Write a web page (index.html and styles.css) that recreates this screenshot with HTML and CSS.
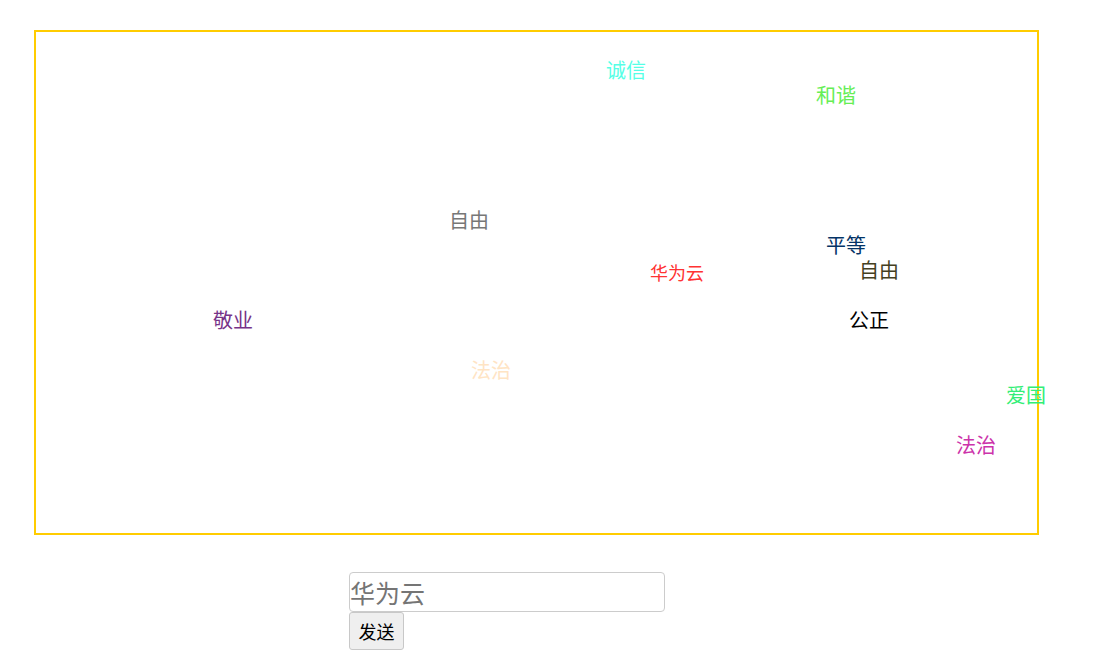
FILE: index.html
```html
<!DOCTYPE html>
<html lang="zh">
<head>
    <meta charset="utf-8">
    <link rel="stylesheet" href="styles.css">
</head>
<body>
    <!-- 弹幕区域 -->
    <div class="screen" id="screen">
        <span class="bullet" style="left:570px; top:26px; color:#55ffe6;">诚信</span>
        <span class="bullet" style="left:780px; top:51px; color:#66ee55;">和谐</span>
        <span class="bullet" style="left:413px; top:176px; color:#777777;">自由</span>
        <span class="bullet" style="left:790px; top:201px; color:#033366;">平等</span>
        <span class="bullet small" style="left:614px; top:228px; color:#ff3333;">华为云</span>
        <span class="bullet" style="left:823px; top:226px; color:#443f22;">自由</span>
        <span class="bullet" style="left:177px; top:276px; color:#773388;">敬业</span>
        <span class="bullet" style="left:813px; top:276px; color:#000000;">公正</span>
        <span class="bullet" style="left:435px; top:326px; color:#ffe4c4;">法治</span>
        <span class="bullet" style="left:970px; top:351px; color:#33ee77;">爱国</span>
        <span class="bullet" style="left:920px; top:401px; color:#cc33aa;">法治</span>
    </div>

    <!-- 发送弹幕 -->
    <div class="controls">
        <input type="text" class="msg" id="msg" placeholder="华为云">
        <button type="button" class="send">发送</button>
    </div>
</body>
</html>
```

FILE: styles.css
```css
body {
    margin: 0;
    font-family: "Noto Sans CJK SC", "Liberation Sans", sans-serif;
}

.screen {
    position: relative;
    width: 1001px;
    height: 501px;
    margin: 30px 0 0 34px;
    border: 2px solid #ffcc00;
}

.bullet {
    position: absolute;
    font-size: 20px;
    line-height: 24px;
    white-space: nowrap;
}

.bullet.small {
    font-size: 18px;
}

.controls {
    display: flex;
    flex-direction: column;
    align-items: flex-start;
    margin: 37px 0 0 349px;
}

.msg {
    width: 316px;
    height: 40px;
    box-sizing: border-box;
    padding: 0;
    border: 1px solid #cccccc;
    border-radius: 4px;
    font-family: "Noto Sans CJK SC", sans-serif;
    font-size: 25px; /* 输入框字体 */
    outline: none;
}

.msg::placeholder {
    color: #757575;
}

.send {
    width: 55px;
    height: 38px;
    padding: 0;
    background-color: #efefef;
    border: 1px solid #c8c8c8;
    border-radius: 3px;
    font-family: "Noto Sans CJK SC", sans-serif;
    font-size: 18px;
    color: #000;
}
```
